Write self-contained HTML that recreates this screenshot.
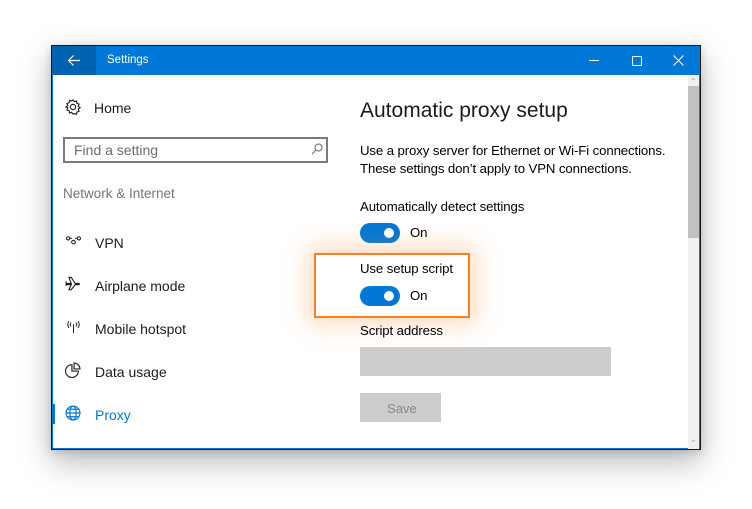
<!DOCTYPE html>
<html><head><meta charset="utf-8"><style>
*{margin:0;padding:0;box-sizing:border-box}
body{width:752px;height:509px;background:#fff;position:relative;overflow:hidden;font-family:"Liberation Sans","DejaVu Sans",sans-serif;color:#000}
.a{position:absolute}
#win{left:51px;top:45px;width:650px;height:405px;border:1px solid #1a1a1a;background:#fff;box-shadow:0 12px 30px rgba(0,0,0,.28),0 2px 8px rgba(0,0,0,.15)}
#inner{left:0;top:0;width:648px;height:403px;border:1px solid #0078d7;border-top:none}
#tb{left:0;top:0;width:648px;height:29px;background:#0078d7}
#back{left:0;top:0;width:44px;height:29px;background:#0063b1}
.t{font-size:13.2px;white-space:nowrap;letter-spacing:-0.1px}
.nav{font-size:14px;color:#1b1b1b}
.tog{width:40px;height:20px;border-radius:10px;background:#0078d7}
.tog:after{content:"";position:absolute;right:6px;top:5px;width:10px;height:10px;border-radius:5px;background:#fff}
</style></head><body>
<div id="win" class="a">
 <div id="inner" class="a"></div>
 <div id="tb" class="a">
  <div id="back" class="a"><svg class="a" style="left:15px;top:8px" width="14" height="13" viewBox="0 0 14 13"><path d="M13 6.5H1.5M6.5 1.5L1.5 6.5L6.5 11.5" stroke="#fff" stroke-width="1.2" fill="none"/></svg></div>
  <div class="a" style="left:55px;top:8px;font-size:11.5px;color:#fff">Settings</div>
  <div class="a" style="left:537px;top:14px;width:10px;height:1px;background:#fff"></div>
  <div class="a" style="left:580px;top:10px;width:10px;height:10px;border:1px solid #fff"></div>
  <svg class="a" style="left:621px;top:9px" width="11" height="11"><path d="M0.5 0.5L10.5 10.5M10.5 0.5L0.5 10.5" stroke="#fff" stroke-width="1"/></svg>
 </div>
 <div class="a" style="left:636px;top:30px;width:11px;height:373px;background:#f0f0f0"></div>
 <div class="a" style="left:636px;top:40px;width:11px;height:152px;background:#c2c2c2"></div>
 <div class="a" style="left:638px;top:31px;font-size:8px;color:#999">&#8963;</div>
 <div class="a" style="left:638px;top:389px;font-size:8px;color:#999">&#8964;</div>
 <svg class="a" style="left:13px;top:53px" width="16" height="16" viewBox="0 0 14 14"><circle cx="7" cy="7" r="2.3" fill="none" stroke="#222" stroke-width="1"/><path d="M7 .8l1.2 1.6 1.9-.6.3 2 1.9.7-.7 1.9 1.6 1.2-1.6 1.2.7 1.9-1.9.7-.3 2-1.9-.6L7 13.2l-1.2-1.6-1.9.6-.3-2-1.9-.7.7-1.9L.8 7l1.6-1.2-.7-1.9 1.9-.7.3-2 1.9.6z" fill="none" stroke="#222" stroke-width="1"/></svg>
 <div class="a nav" style="left:42px;top:54px">Home</div>
 <div class="a" style="left:11px;top:91px;width:265px;height:26px;border:2px solid #7a7a7a"></div>
 <div class="a" style="left:22px;top:96px;font-size:14px;color:#6d6d6d">Find a setting</div>
 <svg class="a" style="left:259px;top:97px" width="12" height="12"><circle cx="7.5" cy="4.5" r="3.5" fill="none" stroke="#666"/><path d="M5 7L1 11" stroke="#666"/></svg>
 <div class="a" style="left:11px;top:140px;font-size:13.5px;color:#767676">Network &amp; Internet</div>
 <svg class="a" style="left:14px;top:190px" width="15" height="9" viewBox="0 0 14 8"><g fill="none" stroke="#222" stroke-width="1"><circle cx="2" cy="2" r="1.5"/><circle cx="7" cy="5.5" r="1.7"/><circle cx="12" cy="2" r="1.5"/><path d="M3.5 2H5.5M8.5 2H10.5"/></g></svg>
 <div class="a nav" style="left:43px;top:189px">VPN</div>
 <svg class="a" style="left:13px;top:229px" width="17" height="17" viewBox="0 0 15 15"><path d="M1 7.5h4.5L3.5 2h2l3.5 5.5H12.5a1 1 0 010 1H9L5.5 13h-2l2-4.5H1" fill="none" stroke="#222" stroke-width="1"/><path d="M1 5.5v4" stroke="#222"/></svg>
 <div class="a nav" style="left:43px;top:232px">Airplane mode</div>
 <svg class="a" style="left:14px;top:274px" width="15" height="13" viewBox="0 0 15 13"><g fill="none" stroke="#222" stroke-width="1"><path d="M7.5 4v9"/><path d="M5 2.5Q3.5 4.5 5 6.5M10 2.5Q11.5 4.5 10 6.5M3 1Q0.5 4.5 3 8M12 1Q14.5 4.5 12 8"/></g></svg>
 <div class="a nav" style="left:43px;top:275px">Mobile hotspot</div>
 <svg class="a" style="left:13px;top:316px" width="16" height="16" viewBox="0 0 15 15"><g fill="none" stroke="#222" stroke-width="1.1"><path d="M6.5 2.5A6 6 0 1 0 12.5 8.5H6.5Z"/><path d="M8.5 1V6.5H14A5.5 5.5 0 0 0 8.5 1Z"/></g></svg>
 <div class="a nav" style="left:43px;top:318px">Data usage</div>
 <div class="a" style="left:0;top:358px;width:3px;height:20px;background:#0078d7"></div>
 <svg class="a" style="left:13px;top:359px" width="16" height="16" viewBox="0 0 15 15"><g fill="none" stroke="#0078d7" stroke-width="1.1"><circle cx="7.5" cy="7.5" r="6.5"/><ellipse cx="7.5" cy="7.5" rx="3" ry="6.5"/><path d="M1 7.5h13M2 4h11M2 11h11"/></g></svg>
 <div class="a nav" style="left:43px;top:361px;color:#0078d7">Proxy</div>
 <div class="a" style="left:308px;top:53px;font-size:21px;color:#1b1b1b">Automatic proxy setup</div>
 <div class="a t" style="left:308px;top:96px;line-height:18px">Use a proxy server for Ethernet or Wi-Fi connections.<br>These settings don’t apply to VPN connections.</div>
 <div class="a t" style="left:308px;top:153px">Automatically detect settings</div>
 <div class="a tog" style="left:308px;top:177px"></div>
 <div class="a t" style="left:358px;top:179px">On</div>
 <div class="a" style="left:262px;top:207px;width:156px;height:65px;border:2px solid #f58220;box-shadow:0 0 22px 6px rgba(248,150,60,.35)"></div>
 <div class="a" style="left:264px;top:209px;width:152px;height:61px;background:#fff"></div>
 <div class="a t" style="left:308px;top:215px">Use setup script</div>
 <div class="a tog" style="left:308px;top:240px"></div>
 <div class="a t" style="left:358px;top:242px">On</div>
 <div class="a t" style="left:308px;top:277px">Script address</div>
 <div class="a" style="left:308px;top:301px;width:251px;height:29px;background:#cccccc"></div>
 <div class="a" style="left:308px;top:347px;width:81px;height:29px;background:#cccccc"></div>
 <div class="a t" style="left:335px;top:355px;color:#8a8a8a">Save</div>
</div>
</body></html>
